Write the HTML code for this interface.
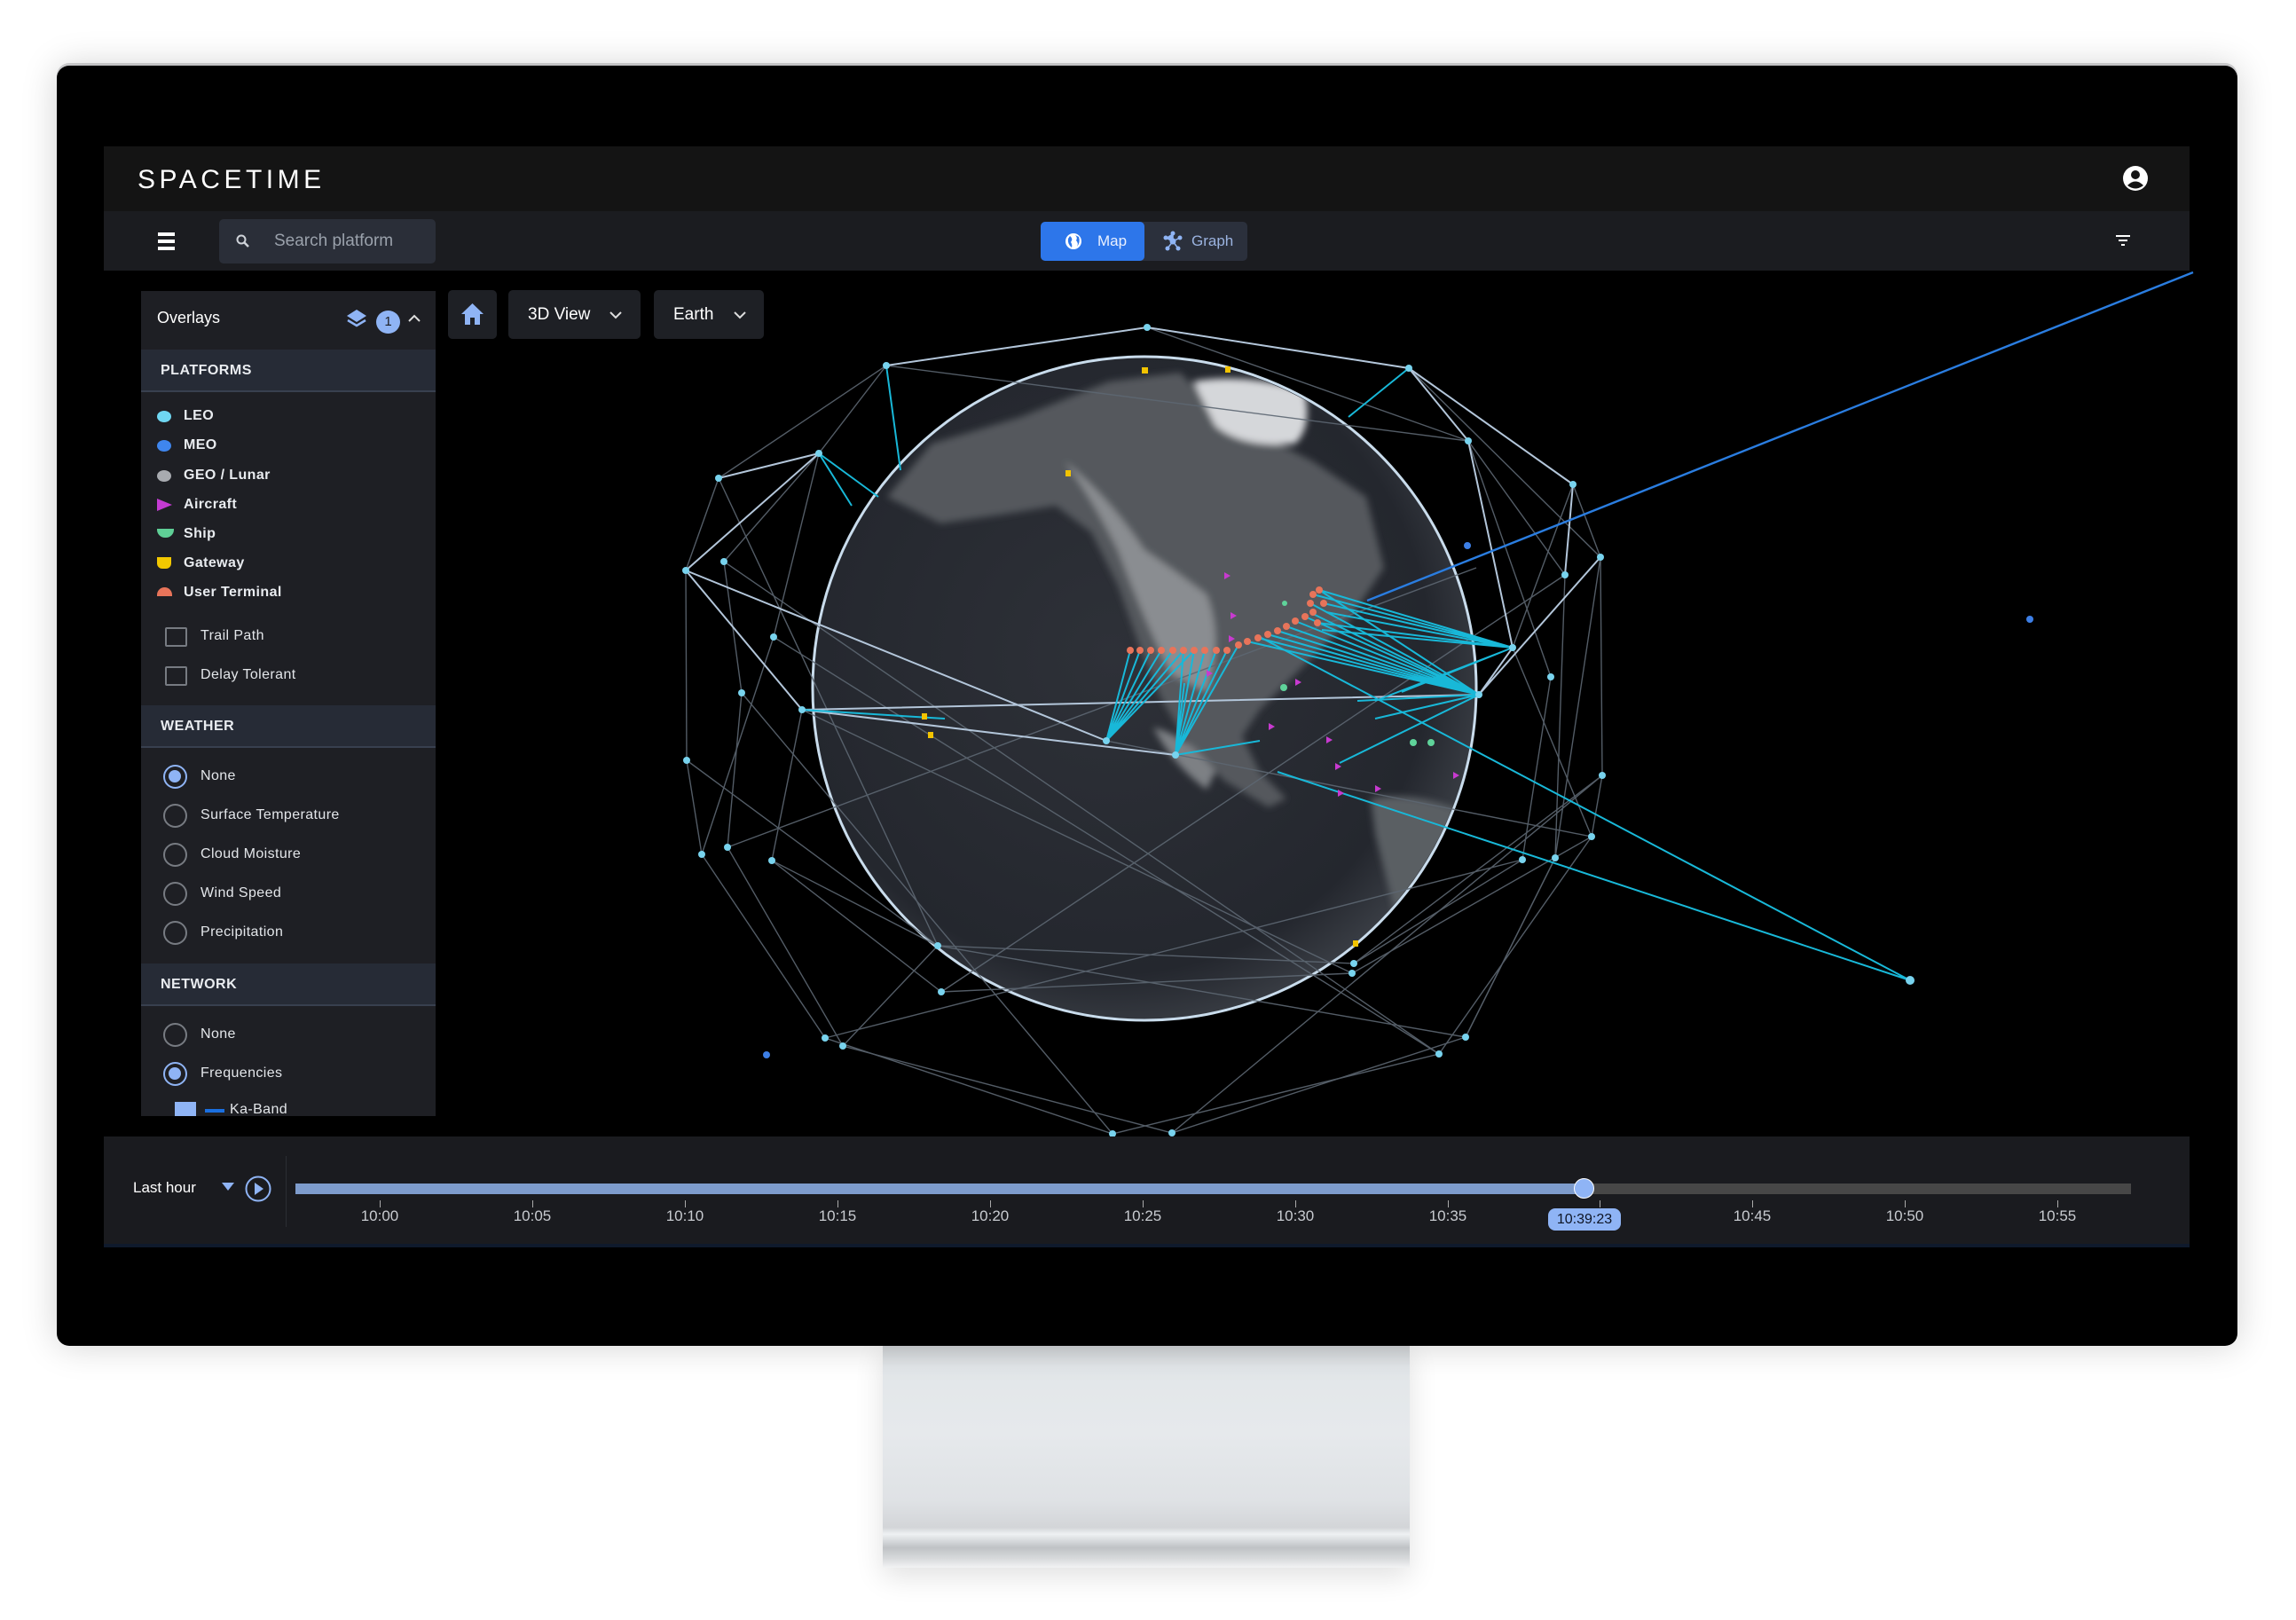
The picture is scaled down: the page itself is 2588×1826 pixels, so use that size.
<!DOCTYPE html>
<html><head><meta charset="utf-8"><style>
*{margin:0;padding:0;box-sizing:border-box}
body{width:2588px;height:1826px;background:#fff;position:relative;overflow:hidden;font-family:"Liberation Sans",sans-serif}
.abs{position:absolute}
#stand{left:995px;top:1515px;width:594px;height:252px;background:linear-gradient(180deg,#cfd2d5 0%,#e2e6e9 10%,#e6e9ec 40%,#dfe2e5 70%,#d3d5d8 82%,#eef1f3 85%,#bfc2c5 91%,#d8dadc 96%,#f2f3f4 100%);box-shadow:0 10px 30px rgba(0,0,0,.12)}
#mon{left:64px;top:74px;width:2458px;height:1443px;background:#000;border-radius:14px;box-shadow:0 0 40px rgba(0,0,0,.18),0 -3px 0 #d5d5d7}
#hdr{left:117px;top:165px;width:2351px;height:73px;background:#141414}
#tb{left:117px;top:238px;width:2351px;height:67px;background:#1b1c20}
.logo{left:155px;top:186px;color:#fff;font-size:30px;letter-spacing:4.5px;font-weight:400}
#search{left:247px;top:247px;width:244px;height:50px;background:#2a2e38;border-radius:5px;color:#9aa1ab;font-size:19px;line-height:50px;padding-left:62px}
.btn{background:#1e2025;border-radius:5px}
#side{left:159px;top:328px;width:332px;height:930px;background:#1e1f24;overflow:hidden;color:#e9ecf0}
.band{position:absolute;left:0;width:332px;height:48px;background:#262b36;border-bottom:2px solid #38404f;font-weight:700;font-size:16px;letter-spacing:.5px;padding-left:22px;line-height:48px}
.it{position:absolute;left:48px;font-size:16px;font-weight:700;letter-spacing:.4px}
.it2{position:absolute;left:67px;font-size:16px;letter-spacing:.4px;color:#e3e6ea}
.dot{position:absolute;left:18px;width:16px;height:13px;border-radius:50%}
.cb{position:absolute;left:27px;width:25px;height:22px;border:2px solid #777b82;border-radius:2px}
.rd{position:absolute;left:25px;width:27px;height:27px;border:2.5px solid #777b82;border-radius:50%}
.rd.on{border-color:#8fb4f5}
.rd.on:after{content:"";position:absolute;left:4px;top:4px;width:14px;height:14px;border-radius:50%;background:#8fb4f5}
#tl{left:117px;top:1281px;width:2351px;height:125px;background:#1a1b1f;border-bottom:4px solid #0f1a2c}
.tk{position:absolute;top:1353px;width:1px;height:8px;background:#aaa}
.tl{position:absolute;top:1361px;color:#c8cbd0;font-size:17px;width:60px;margin-left:-30px;text-align:center}
</style></head><body>
<div id="stand" class="abs"></div>
<div id="mon" class="abs"></div>
<div id="hdr" class="abs"></div>
<div class="abs logo">SPACETIME</div>
<svg class="abs" style="left:2392px;top:186px" width="30" height="30" viewBox="0 0 30 30"><circle cx="15" cy="15" r="14" fill="#fff"/><circle cx="15" cy="11" r="5" fill="#141414"/><path d="M6 23 Q15 14 24 23 Q15 30 6 23Z" fill="#141414"/></svg>
<div id="tb" class="abs"></div>
<div class="abs" style="left:178px;top:262px;width:19px;height:4px;background:#fff;box-shadow:0 8px 0 #fff,0 16px 0 #fff"></div>
<div id="search" class="abs">Search platform</div>
<svg class="abs" style="left:265px;top:263px" width="18" height="18" viewBox="0 0 18 18"><circle cx="7" cy="7" r="4.5" fill="none" stroke="#cfd3d9" stroke-width="2"/><path d="M10 10 L15 15" stroke="#cfd3d9" stroke-width="2.5"/></svg>
<div class="abs" style="left:1173px;top:250px;width:233px;height:44px;background:#2b303c;border-radius:5px"></div>
<div class="abs" style="left:1173px;top:250px;width:117px;height:44px;background:#2d76ea;border-radius:5px;color:#e9f0ff;font-size:17px;line-height:44px;padding-left:64px">Map</div>
<svg class="abs" style="left:1199px;top:261px" width="22" height="22" viewBox="0 0 22 22"><circle cx="11" cy="11" r="9" fill="#fff"/><path d="M7 5 Q11 8 8 12 Q10 15 9 18 Q4 14 5 8Z M13 4 Q16 7 14 10 Q17 13 15 17 Q19 12 17 6Z" fill="#2d76ea"/></svg>
<div class="abs" style="left:1343px;top:250px;color:#9bb3e0;font-size:17px;line-height:44px">Graph</div>
<svg class="abs" style="left:1310px;top:260px" width="24" height="24" viewBox="0 0 24 24" fill="#8fb4f5"><circle cx="12" cy="12" r="3.5"/><circle cx="12" cy="3" r="2.5"/><circle cx="4" cy="8" r="2.5"/><circle cx="20" cy="8" r="2.5"/><circle cx="6" cy="20" r="2.5"/><circle cx="18" cy="20" r="2.5"/><path d="M12 3V12L4 8M12 12L20 8M12 12L6 20M12 12L18 20" stroke="#8fb4f5" stroke-width="1.5"/></svg>
<div class="abs" style="left:2385px;top:265px;width:16px;height:2px;background:#fff"></div>
<div class="abs" style="left:2388px;top:270px;width:10px;height:2px;background:#fff"></div>
<div class="abs" style="left:2391px;top:275px;width:4px;height:2px;background:#fff"></div>

<svg class="abs" style="left:0;top:0" width="2588" height="1826">
<defs>
<radialGradient id="gg" cx="0.45" cy="0.45" r="0.6"><stop offset="0" stop-color="#2e3138"/><stop offset="0.8" stop-color="#24272e"/><stop offset="0.96" stop-color="#3a3e45"/><stop offset="1" stop-color="#8d99a6"/></radialGradient>
<filter id="bl"><feGaussianBlur stdDeviation="4"/></filter>
<clipPath id="gc"><circle cx="1290" cy="776" r="372"/></clipPath>
</defs>
<circle cx="1290" cy="776" r="374" fill="url(#gg)" stroke="#c9dcec" stroke-width="3"/>
<g clip-path="url(#gc)" filter="url(#bl)">
<path d="M1000 560L1050 500L1150 470L1250 430L1330 420L1380 470L1480 520L1540 560L1560 640L1520 700L1480 740L1440 780L1420 800L1400 830L1420 870L1450 900L1430 910L1380 880L1340 840L1310 790L1285 730L1260 660L1230 600L1190 570L1130 580L1060 590Z" fill="#55585d"/>
<path d="M1200 520 Q1230 560 1260 620 Q1290 700 1320 760 L1360 780 Q1380 720 1360 670 Q1320 640 1290 620 Q1250 560 1200 520Z" fill="#8a8d91"/>
<path d="M1345 430 Q1400 420 1470 440 Q1480 480 1460 500 Q1400 505 1370 480Z" fill="#d5d7da"/>
<path d="M1545 900 Q1600 890 1660 920 L1650 1000 Q1610 1050 1585 1080 Q1565 1000 1550 940Z" fill="#5a5e63"/>
<path d="M1300 820 Q1340 830 1370 870 L1360 890 Q1320 860 1300 820Z" fill="#7d8084"/>
</g>
<g stroke="#5d6772" stroke-width="1.4" fill="none" opacity=".9">
<path d="M1293 369L999 412L810 539L773 643L774 857L791 963L930 1170L1254 1278L1622 1188L1794 943L1806 874L1804 628L1773 546L1588 415L1293 369"/>
<path d="M999 412L923 511L816 633L836 781L820 955L950 1179L1321 1277L1652 1169L1753 967L1764 648L1655 497L1293 369"/>
<path d="M810 539L1057 1066L1526 1086L1716 969L1748 763L1655 497L999 412"/>
<path d="M773 643L904 800L870 970L1061 1118L1524 1097L1794 943"/>
<path d="M816 633L1622 1188M923 511L872 718L791 963M1588 415L1804 628L1753 967L1652 1169"/>
<path d="M774 857L1057 1066L1652 1169M836 781L1254 1278M1321 1277L1806 874M930 1170L1716 969"/>
<path d="M820 955L1664 640M870 970L1057 1066L950 1179M1773 546L1705 730L1794 943M1293 369L1588 415"/>
<path d="M904 800L1524 1097M1061 1118L1764 648M1247 835L1794 943M872 718L1622 1188M1806 874L1526 1086"/>
</g>
<g stroke="#b3c6da" stroke-width="2" fill="none">
<path d="M999 412L1293 369L1588 415L1773 546"/>
<path d="M773 643L923 511L810 539M773 643L1247 835M904 800L1667 783L1705 730M904 800L1325 851M1655 497L1705 730L1667 783L1804 628"/>
<path d="M773 643L904 800M1773 546L1764 648M1588 415L1655 497"/>
</g>
<g stroke="#18b8d8" stroke-width="2" fill="none">
<path d="M999 412L1015 530M923 511L990 560M923 511L960 570M1588 415L1520 470M904 800L1065 810M1325 851L1420 835"/>
<path d="M1247 835L1274 733M1247 835L1285 733M1247 835L1297 733M1247 835L1309 733M1247 835L1322 733M1247 835L1334 733M1247 835L1346 733"/>
<path d="M1325 851L1334 733M1325 851L1346 733M1325 851L1358 733M1325 851L1371 733M1325 851L1383 733M1325 851L1396 727M1325 851L1335 770"/>
<path d="M1667 783L1406 723M1667 783L1418 719M1667 783L1429 715M1667 783L1440 711M1667 783L1450 706M1667 783L1460 700M1667 783L1471 695M1667 783L1480 692M1667 783L1477 680M1667 783L1487 665M1667 783L1530 790M1667 783L1550 810M1667 783L1510 860"/>
<path d="M1705 730L1487 665M1705 730L1480 670M1705 730L1492 680M1705 730L1495 690M1705 730L1485 702M1705 730L1490 710M1705 730L1550 790M1705 730L1580 780"/>
<path d="M1420 718L2153 1105M1440 870L2153 1105"/>
</g>
<path d="M1541 677L2472 307" stroke="#2a7de0" stroke-width="2.4"/>
<g fill="#e8745a">
<circle cx="1274" cy="733" r="4"/><circle cx="1285" cy="733" r="4"/><circle cx="1297" cy="733" r="4"/><circle cx="1309" cy="733" r="4"/><circle cx="1322" cy="733" r="4"/><circle cx="1334" cy="733" r="4"/><circle cx="1346" cy="733" r="4"/><circle cx="1358" cy="733" r="4"/><circle cx="1371" cy="733" r="4"/><circle cx="1383" cy="733" r="4"/><circle cx="1396" cy="727" r="4"/><circle cx="1406" cy="723" r="4"/><circle cx="1418" cy="719" r="4"/><circle cx="1429" cy="715" r="4"/><circle cx="1440" cy="711" r="4"/><circle cx="1450" cy="706" r="4"/><circle cx="1460" cy="700" r="4"/><circle cx="1471" cy="695" r="4"/><circle cx="1480" cy="690" r="4"/><circle cx="1477" cy="680" r="4"/><circle cx="1480" cy="670" r="4"/><circle cx="1487" cy="665" r="4"/><circle cx="1492" cy="680" r="4"/><circle cx="1485" cy="702" r="4"/>
</g>
<g fill="#c83ad0"><path d="M1387 690l7 4-7 4z M1380 645l7 4-7 4z M1460 765l7 4-7 4z M1430 815l7 4-7 4z M1495 830l7 4-7 4z M1505 860l7 4-7 4z M1508 890l7 4-7 4z M1550 885l7 4-7 4z M1638 870l7 4-7 4z M1360 755l7 4-7 4z M1385 716l7 4-7 4z"/></g>
<g fill="#f2c300"><rect x="1287" y="414" width="7" height="7"/><rect x="1381" y="413" width="6" height="7"/><rect x="1201" y="530" width="6" height="7"/><rect x="1039" y="804" width="6" height="7"/><rect x="1046" y="825" width="6" height="7"/><rect x="1525" y="1060" width="6" height="7"/></g>
<g fill="#5fd39a"><circle cx="1447" cy="775" r="4"/><circle cx="1593" cy="837" r="4"/><circle cx="1613" cy="837" r="4"/><circle cx="1448" cy="680" r="3"/></g>
<g fill="#78d3ee">
<circle cx="1293" cy="369" r="4"/><circle cx="999" cy="412" r="4"/><circle cx="1588" cy="415" r="4"/><circle cx="1655" cy="497" r="4"/><circle cx="1773" cy="546" r="4"/><circle cx="923" cy="511" r="4"/><circle cx="810" cy="539" r="4"/><circle cx="773" cy="643" r="4"/><circle cx="816" cy="633" r="4"/><circle cx="1804" cy="628" r="4"/><circle cx="1764" cy="648" r="4"/><circle cx="1705" cy="730" r="4"/><circle cx="1667" cy="783" r="4"/><circle cx="1748" cy="763" r="4"/><circle cx="872" cy="718" r="4"/><circle cx="836" cy="781" r="4"/><circle cx="904" cy="800" r="4"/><circle cx="1247" cy="835" r="4"/><circle cx="1325" cy="851" r="4"/><circle cx="774" cy="857" r="4"/><circle cx="1806" cy="874" r="4"/><circle cx="1794" cy="943" r="4"/><circle cx="791" cy="963" r="4"/><circle cx="820" cy="955" r="4"/><circle cx="870" cy="970" r="4"/><circle cx="1753" cy="967" r="4"/><circle cx="1716" cy="969" r="4"/><circle cx="1057" cy="1066" r="4"/><circle cx="1526" cy="1086" r="4"/><circle cx="1524" cy="1097" r="4"/><circle cx="1061" cy="1118" r="4"/><circle cx="930" cy="1170" r="4"/><circle cx="950" cy="1179" r="4"/><circle cx="1652" cy="1169" r="4"/><circle cx="1622" cy="1188" r="4"/><circle cx="1254" cy="1278" r="4"/><circle cx="1321" cy="1277" r="4"/><circle cx="2153" cy="1105" r="5"/>
</g>
<g fill="#3d7fe6"><circle cx="2288" cy="698" r="4"/><circle cx="1654" cy="615" r="4"/><circle cx="864" cy="1189" r="4"/></g>
</svg>

<div class="abs btn" style="left:505px;top:327px;width:55px;height:55px"></div>
<svg class="abs" style="left:519px;top:341px" width="27" height="26" viewBox="0 0 27 26"><path d="M13.5 1L1 13h4v12h6v-8h5v8h6V13h4z" fill="#8fb4f5"/></svg>
<div class="abs btn" style="left:573px;top:327px;width:149px;height:55px;color:#fff;font-size:19px;line-height:55px;padding-left:22px">3D View</div>
<svg class="abs" style="left:686px;top:350px" width="16" height="10"><path d="M2 2L8 8L14 2" stroke="#ddd" stroke-width="2" fill="none"/></svg>
<div class="abs btn" style="left:737px;top:327px;width:124px;height:55px;color:#fff;font-size:19px;line-height:55px;padding-left:22px">Earth</div>
<svg class="abs" style="left:826px;top:350px" width="16" height="10"><path d="M2 2L8 8L14 2" stroke="#ddd" stroke-width="2" fill="none"/></svg>

<div id="side" class="abs">
<div style="position:absolute;left:18px;top:20px;font-size:18px;color:#fff">Overlays</div>
<svg style="position:absolute;left:230px;top:20px" width="26" height="24" viewBox="0 0 26 24"><path d="M13 1L24 8L13 15L2 8Z" fill="#8fb4f5"/><path d="M3 13L13 19L23 13" stroke="#8fb4f5" stroke-width="2.5" fill="none"/></svg>
<div style="position:absolute;left:265px;top:22px;width:27px;height:26px;border-radius:50%;background:#8fb4f5;color:#1e1f24;font-size:15px;text-align:center;line-height:26px">1</div>
<svg style="position:absolute;left:300px;top:26px" width="16" height="10"><path d="M2 8L8 2L14 8" stroke="#ddd" stroke-width="2" fill="none"/></svg>
<div class="band" style="top:66px">PLATFORMS</div>
<div class="dot" style="top:135px;background:#6fd7f2"></div><div class="it" style="top:132px">LEO</div>
<div class="dot" style="top:168px;background:#3f86ee"></div><div class="it" style="top:165px">MEO</div>
<div class="dot" style="top:202px;background:#a8abb0"></div><div class="it" style="top:199px">GEO / Lunar</div>
<svg style="position:absolute;left:18px;top:234px" width="18" height="14"><path d="M0 0L17 7L0 14Z" fill="#c53bd3"/></svg><div class="it" style="top:232px">Aircraft</div>
<div class="dot" style="top:268px;background:#5fcf96;border-radius:0 0 9px 9px;height:10px;width:19px"></div><div class="it" style="top:265px">Ship</div>
<div class="dot" style="top:300px;background:#f3c800;border-radius:0 0 6px 6px;height:13px"></div><div class="it" style="top:298px">Gateway</div>
<div class="dot" style="top:334px;background:#e8745a;border-radius:9px 9px 0 0;height:10px;width:17px"></div><div class="it" style="top:331px">User Terminal</div>
<div class="cb" style="top:379px"></div><div class="it2" style="top:380px">Trail Path</div>
<div class="cb" style="top:423px"></div><div class="it2" style="top:424px">Delay Tolerant</div>
<div class="band" style="top:467px">WEATHER</div>
<div class="rd on" style="top:534px"></div><div class="it2" style="top:538px">None</div>
<div class="rd" style="top:578px"></div><div class="it2" style="top:582px">Surface Temperature</div>
<div class="rd" style="top:622px"></div><div class="it2" style="top:626px">Cloud Moisture</div>
<div class="rd" style="top:666px"></div><div class="it2" style="top:670px">Wind Speed</div>
<div class="rd" style="top:710px"></div><div class="it2" style="top:714px">Precipitation</div>
<div class="band" style="top:758px">NETWORK</div>
<div class="rd" style="top:825px"></div><div class="it2" style="top:829px">None</div>
<div class="rd on" style="top:869px"></div><div class="it2" style="top:873px">Frequencies</div>
<div style="position:absolute;left:38px;top:914px;width:24px;height:22px;background:#8fb4f5"></div>
<div style="position:absolute;left:72px;top:922px;width:22px;height:4px;background:#1a6fe0"></div>
<div class="it2" style="left:100px;top:914px">Ka-Band</div>
</div>

<div id="tl" class="abs"></div>
<div class="abs" style="left:150px;top:1329px;color:#fff;font-size:17px">Last hour</div>
<svg class="abs" style="left:250px;top:1333px" width="14" height="10"><path d="M0 0H14L7 9Z" fill="#8fb4f5"/></svg>
<svg class="abs" style="left:275px;top:1324px" width="32" height="32"><circle cx="16" cy="16" r="13.5" fill="none" stroke="#8fb4f5" stroke-width="2"/><path d="M12 9L22 16L12 23Z" fill="#8fb4f5"/></svg>
<div class="abs" style="left:322px;top:1303px;width:1px;height:80px;background:#2c2e33"></div>
<div class="abs" style="left:333px;top:1334px;width:2069px;height:12px;background:#474747"></div>
<div class="abs" style="left:333px;top:1334px;width:1453px;height:12px;background:#7e9ccc"></div>
<div class="abs" style="left:1774px;top:1328px;width:23px;height:23px;border-radius:50%;background:#8fb4f5;border:1.5px solid #fff"></div>
<div class="tk" style="left:428px"></div><div class="tl" style="left:428px">10:00</div>
<div class="tk" style="left:600px"></div><div class="tl" style="left:600px">10:05</div>
<div class="tk" style="left:772px"></div><div class="tl" style="left:772px">10:10</div>
<div class="tk" style="left:944px"></div><div class="tl" style="left:944px">10:15</div>
<div class="tk" style="left:1116px"></div><div class="tl" style="left:1116px">10:20</div>
<div class="tk" style="left:1288px"></div><div class="tl" style="left:1288px">10:25</div>
<div class="tk" style="left:1460px"></div><div class="tl" style="left:1460px">10:30</div>
<div class="tk" style="left:1632px"></div><div class="tl" style="left:1632px">10:35</div>
<div class="tk" style="left:1803px"></div>
<div class="tk" style="left:1975px"></div><div class="tl" style="left:1975px">10:45</div>
<div class="tk" style="left:2147px"></div><div class="tl" style="left:2147px">10:50</div>
<div class="tk" style="left:2319px"></div><div class="tl" style="left:2319px">10:55</div>
<div class="abs" style="left:1745px;top:1362px;width:82px;height:25px;border-radius:8px;background:#8fb4f5;color:#0d1424;font-size:16px;text-align:center;line-height:25px">10:39:23</div>
</body></html>
